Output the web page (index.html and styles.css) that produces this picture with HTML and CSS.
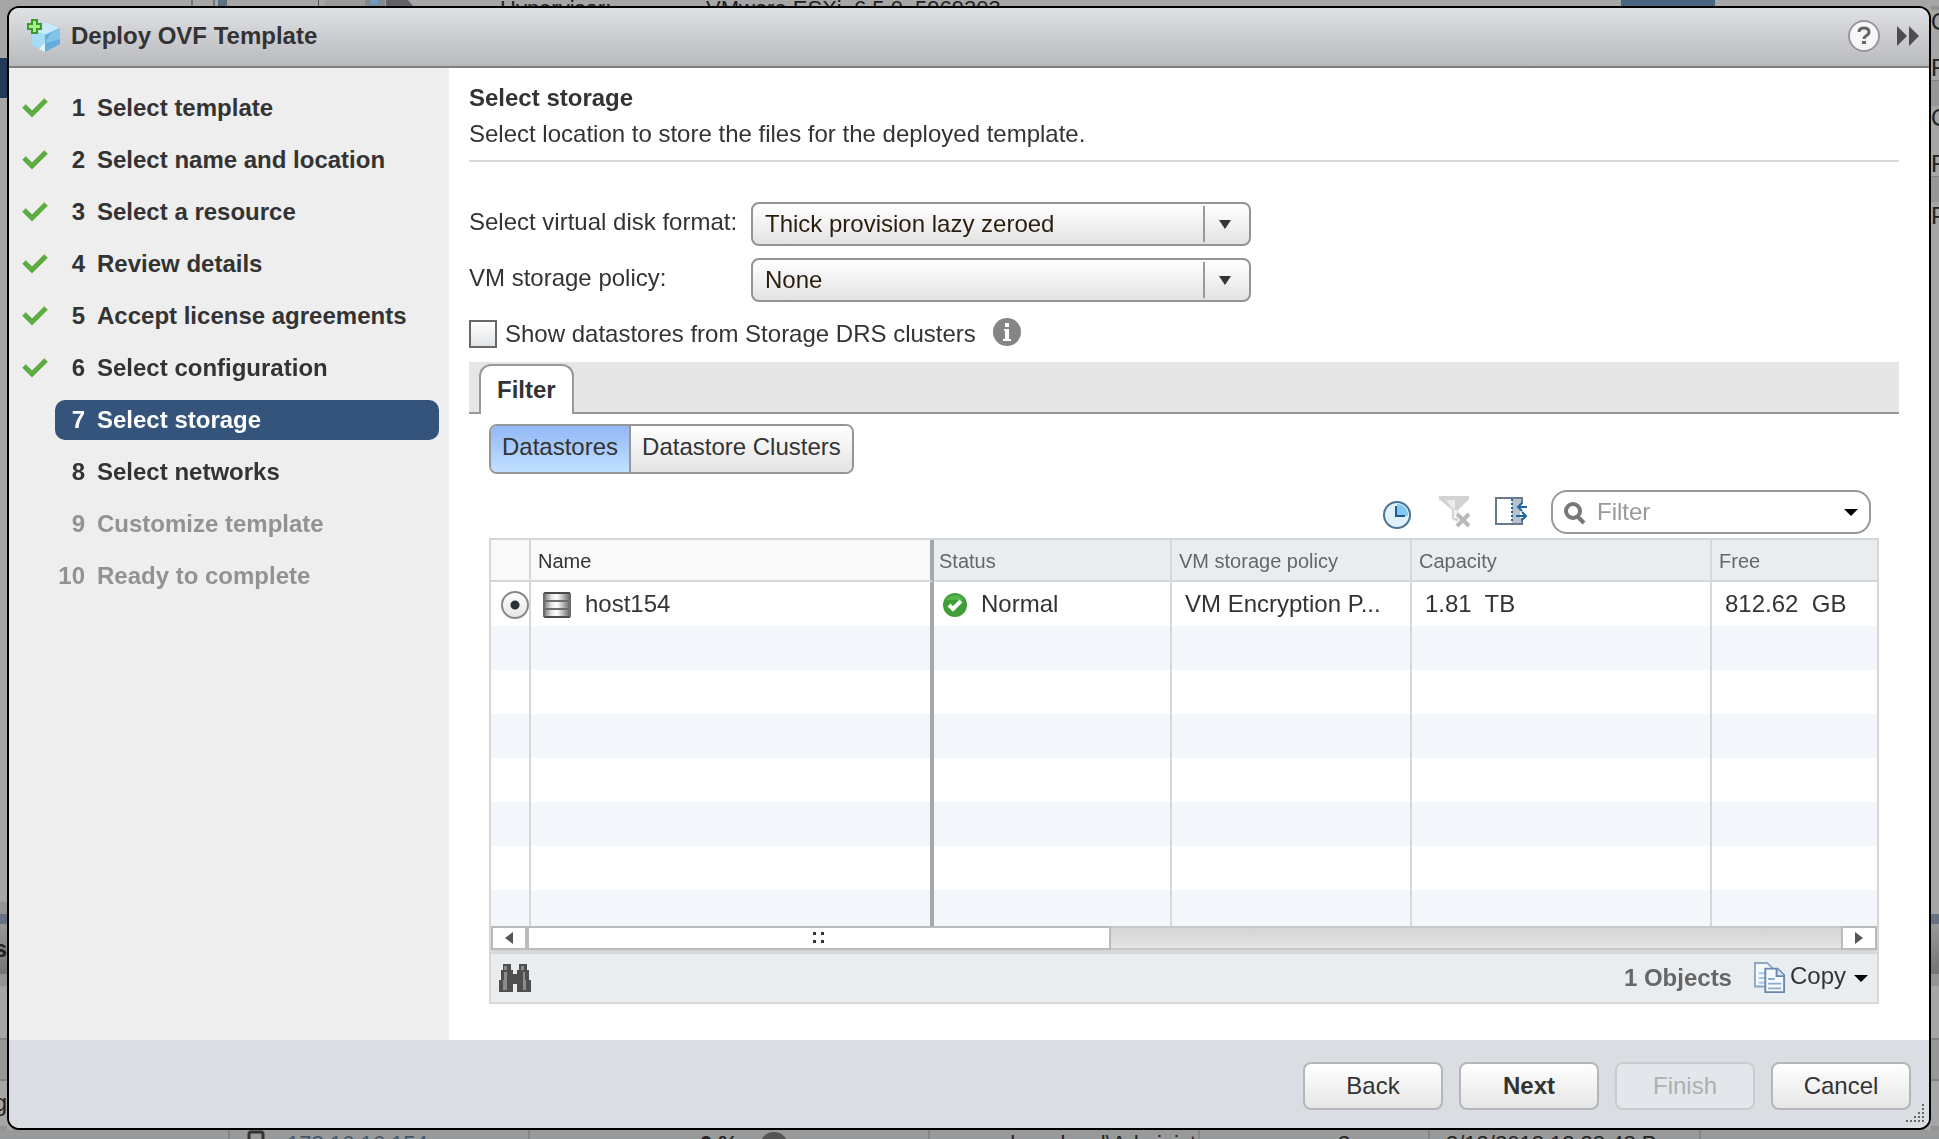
FILE: index.html
```html
<!DOCTYPE html>
<html lang="en">
<head>
<meta charset="utf-8">
<title>Deploy OVF Template</title>
<link rel="stylesheet" href="styles.css">
</head>
<body>
<div class="backdrop" aria-hidden="true">
  <div class="edge-top">
    <svg class="edge-art" viewBox="0 0 430 6" width="430" height="6">
      <path d="M191 0h2v6h-2zM213 0h2v6h-2z" fill="#777"/>
      <path d="M218 0h9v6h-9z" fill="#5d7080"/>
      <path d="M318 0h1v6h-1z" fill="#555"/>
      <path d="M325 0h42v6h-42z" fill="#9a9a9a"/>
      <path d="M365 0h20v6h-20z" fill="#7f8a95"/>
      <path d="M371 0h6v4h-6z" fill="#6a9fcf"/>
      <path d="M386 0h22l5 6h-27z" fill="#626266"/>
    </svg>
    <span class="edge-label">Hypervisor:</span>
    <span class="edge-value">VMware ESXi, 6.5.0, 5969303</span>
    <span class="edge-link"></span>
  </div>
  <div class="edge-left">
    <div class="fill h52"></div>
    <div class="navy"></div>
    <div class="fill grow"></div>
    <div class="band"></div>
    <div class="blue"></div>
    <div class="bar"><b>s</b></div>
    <div class="band"></div>
    <div class="fill h52"></div>
    <div class="shade"></div>
    <div class="fill h45"><span>g</span></div>
    <div class="band thin"></div>
  </div>
  <div class="edge-right">
    <div class="band thin"></div>
    <div class="pair"><span>O</span><span>F</span></div>
    <div class="shade short"></div>
    <div class="pair"><span>O</span><span>F</span></div>
    <div class="shade short"></div>
    <div class="fill grow"><span>P</span></div>
    <div class="blue"></div>
    <div class="bar"></div>
    <div class="band"></div>
    <div class="fill h52"></div>
    <div class="shade"></div>
    <div class="fill h45"></div>
    <div class="band thin"></div>
  </div>
  <div class="edge-bottom">
    <span class="cell c1"></span>
    <span class="cell c2"><svg width="18" height="9" viewBox="0 0 18 9"><path d="M2 9V4q0-2 2-2h10q2 0 2 2v5" fill="none" stroke="#333" stroke-width="3"/></svg><i>172.16.16.154</i></span>
    <span class="cell c3"><b>0 %</b><svg width="32" height="9" viewBox="0 0 32 9"><circle cx="16" cy="16" r="14" fill="#555"/></svg></span>
    <span class="cell c4">vsphere.local\Administrator</span>
    <span class="cell c5">3 ms</span>
    <span class="cell c6">3/13/2018 12:28:48 P</span>
  </div>
</div>

<main class="dialog" role="dialog" aria-labelledby="dialog-title">
  <header class="titlebar">
    <svg class="ovf-icon" width="34" height="34" viewBox="0 0 34 34">
      <path d="M4 10L19 3l14 6v16l-15 8L5 26z" fill="#72bce8"/>
      <path d="M4 10L19 3l14 6-15 7z" fill="#c8e9f8"/>
      <path d="M4 10l14 6v17L5 26z" fill="#a6dcf5"/>
      <path d="M18 16l15-7v16l-15 8z" fill="#65aedb"/>
      <path d="M18 24l6-10 9-5v11z" fill="#83c5ea"/>
      <path d="M18 33V24l-6 6z" fill="#e2f5fd"/>
      <path d="M5 1h5v4h4v5h-4v4H5v-4H1V5h4z" fill="#a6ee85" stroke="#3c9a2b" stroke-width="2"/>
    </svg>
    <h1 id="dialog-title">Deploy OVF Template</h1>
    <button class="icon-button" aria-label="Help">
      <svg width="34" height="34" viewBox="0 0 34 34">
        <circle cx="17" cy="17" r="15" fill="#f7f7f7" stroke="#98989a" stroke-width="2"/>
        <path d="M12 13q0-4 5-4t5 4q0 2-3 4-2 1-2 3" fill="none" stroke="#666" stroke-width="3"/>
        <path d="M15 22h4v3h-4z" fill="#666"/>
      </svg>
    </button>
    <button class="icon-button" aria-label="Collapse">
      <svg width="22" height="22" viewBox="0 0 22 22"><path d="M0 1l10 10L0 21zM12 1l10 10-10 10z" fill="#4d4d4f"/></svg>
    </button>
  </header>

  <div class="body">
    <nav class="steps" aria-label="Wizard steps">
      <ol>
        <li><svg class="check" viewBox="0 0 26 20"><path d="M2 8l8 8L24 2" /></svg><a href="#1"><span class="num">1</span>Select template</a></li>
        <li><svg class="check" viewBox="0 0 26 20"><path d="M2 8l8 8L24 2" /></svg><a href="#2"><span class="num">2</span>Select name and location</a></li>
        <li><svg class="check" viewBox="0 0 26 20"><path d="M2 8l8 8L24 2" /></svg><a href="#3"><span class="num">3</span>Select a resource</a></li>
        <li><svg class="check" viewBox="0 0 26 20"><path d="M2 8l8 8L24 2" /></svg><a href="#4"><span class="num">4</span>Review details</a></li>
        <li><svg class="check" viewBox="0 0 26 20"><path d="M2 8l8 8L24 2" /></svg><a href="#5"><span class="num">5</span>Accept license agreements</a></li>
        <li><svg class="check" viewBox="0 0 26 20"><path d="M2 8l8 8L24 2" /></svg><a href="#6"><span class="num">6</span>Select configuration</a></li>
        <li><span class="check"></span><a href="#7" class="current" aria-current="step"><span class="num">7</span>Select storage</a></li>
        <li><span class="check"></span><a href="#8"><span class="num">8</span>Select networks</a></li>
        <li><span class="check"></span><a class="disabled" href="#9"><span class="num">9</span>Customize template</a></li>
        <li><span class="check"></span><a class="disabled" href="#10"><span class="num">10</span>Ready to complete</a></li>
      </ol>
    </nav>

    <section class="content">
      <div class="intro">
        <h2>Select storage</h2>
        <p>Select location to store the files for the deployed template.</p>
      </div>

      <div class="form">
        <label for="disk-format">Select virtual disk format:</label>
        <div class="combo">
          <select id="disk-format"><option>Thick provision lazy zeroed</option></select>
          <svg class="combo-arrow" width="12" height="10" viewBox="0 0 12 10"><path d="M0 1h12L6 10z" fill="#333"/></svg>
        </div>
        <label for="policy">VM storage policy:</label>
        <div class="combo">
          <select id="policy"><option>None</option></select>
          <svg class="combo-arrow" width="12" height="10" viewBox="0 0 12 10"><path d="M0 1h12L6 10z" fill="#333"/></svg>
        </div>
      </div>
      <div class="drs">
        <input type="checkbox" id="drs"><label for="drs">Show datastores from Storage DRS clusters</label>
        <svg class="info" width="30" height="30" viewBox="0 0 30 30"><circle cx="15" cy="15" r="14" fill="#858585"/><path d="M13 6h4v4h-4zM12 12h5v10h2v2h-8v-2h2v-8h-1z" fill="#fff"/></svg>
      </div>

      <div class="tabs" role="tablist"><button class="tab" role="tab" aria-selected="true">Filter</button></div>

      <div class="panel">
        <div class="toggle">
          <button class="on">Datastores</button><button>Datastore Clusters</button>
        </div>

        <div class="toolbar">
          <button class="icon-button tool-clock" aria-label="Recent">
            <svg width="28" height="28" viewBox="0 0 28 28"><circle cx="14" cy="14" r="13" fill="#dff2fb" stroke="#4a7396" stroke-width="2"/><path d="M14 3a11 11 0 0 1 11 11v1H14z" fill="#83c9f2"/><path d="M13 5v10h9" fill="none" stroke="#22588c" stroke-width="2"/></svg>
          </button>
          <button class="icon-button" aria-label="Clear filter" disabled>
            <svg width="32" height="32" viewBox="0 0 32 32"><path d="M0 0h30v3L19 14v12l-6-3v-9L0 3z" fill="#d2d2d2"/><path d="M7 4h9v9h-2z" fill="#ececec"/><path d="M15 14h3v8h-3z" fill="#f5f5f5"/><path d="M18 18l12 12M30 18L18 30" stroke="#fff" stroke-width="6"/><path d="M18 18l12 12M30 18L18 30" stroke="#bababa" stroke-width="4"/></svg>
          </button>
          <button class="icon-button" aria-label="Columns">
            <svg width="32" height="30" viewBox="0 0 32 30"><path d="M1 1h26v26H1z" fill="#fff" stroke="#68798a" stroke-width="2"/><path d="M17 2h9v24h-9z" fill="#b9c2ca"/><path d="M25 7h7v14h-7z" fill="#fff"/><path d="M17 7h8v14h-8z" fill="#b9c2ca"/><path d="M17 2v24" stroke="#1d64a8" stroke-width="2" stroke-dasharray="2 2"/><path d="M32 10h-9M27 6l-4 4 4 4M21 19h9M27 15l4 4-4 4" fill="none" stroke="#1d64a8" stroke-width="2"/></svg>
          </button>
          <div class="search">
            <svg width="24" height="26" viewBox="0 0 24 26"><circle cx="10" cy="12" r="7" fill="none" stroke="#777" stroke-width="4"/><path d="M14 17l7 7" stroke="#777" stroke-width="4"/></svg>
            <input type="text" placeholder="Filter" aria-label="Filter">
            <svg width="16" height="8" viewBox="0 0 16 8"><path d="M1 1h14L8 8z" fill="#000"/></svg>
          </div>
        </div>

        <div class="grid">
          <div class="rows">
            <table>
              <colgroup><col class="w-sel"><col><col class="w-status"><col class="w-policy"><col class="w-cap"><col class="w-free"></colgroup>
              <thead>
                <tr><th class="locked"></th><th class="locked split">Name</th><th class="first">Status</th><th>VM storage policy</th><th>Capacity</th><th>Free</th></tr>
              </thead>
              <tbody>
                <tr>
                  <td class="pick"><input type="radio" name="datastore" aria-label="host154" checked></td>
                  <td class="split"><span class="with-icon name"><svg width="28" height="26" viewBox="0 0 28 26"><defs><linearGradient id="disk"><stop offset="0" stop-color="#777"/><stop offset=".3" stop-color="#e8e8e8"/><stop offset=".5" stop-color="#fff"/><stop offset="1" stop-color="#666"/></linearGradient></defs><rect x="1" y="1" width="26" height="24" rx="1" fill="url(#disk)"/><path d="M1 1h26M1 25h26" stroke="#4c4c4c" stroke-width="2"/><path d="M1 1v24M27 1v24M1 9h26M1 17h26" stroke="#6c6c6c" stroke-width="2"/></svg>host154</span></td>
                  <td><span class="with-icon"><svg width="24" height="24" viewBox="0 0 24 24"><circle cx="12" cy="12" r="12" fill="#3f9f37"/><path d="M3 7a11 11 0 0 1 18 0z" fill="#58b34c"/><path d="M6 12l4 4 8-8" fill="none" stroke="#fff" stroke-width="4"/></svg>Normal</span></td>
                  <td>VM Encryption P...</td>
                  <td>1.81&nbsp; TB</td>
                  <td>812.62&nbsp; GB</td>
                </tr>
                <tr><td></td><td class="split"></td><td></td><td></td><td></td><td></td></tr>
                <tr><td></td><td class="split"></td><td></td><td></td><td></td><td></td></tr>
                <tr><td></td><td class="split"></td><td></td><td></td><td></td><td></td></tr>
                <tr><td></td><td class="split"></td><td></td><td></td><td></td><td></td></tr>
                <tr><td></td><td class="split"></td><td></td><td></td><td></td><td></td></tr>
                <tr><td></td><td class="split"></td><td></td><td></td><td></td><td></td></tr>
                <tr><td></td><td class="split"></td><td></td><td></td><td></td><td></td></tr>
              </tbody>
            </table>
          </div>
          <div class="scrollbar">
            <button aria-label="Scroll left"><svg width="8" height="12" viewBox="0 0 8 12"><path d="M8 0v12L0 6z" fill="#555"/></svg></button>
            <div class="track"><div class="thumb"><svg width="12" height="12" viewBox="0 0 12 12"><path d="M0 0h3v3H0zM8 0h3v3H8zM0 8h3v3H0zM8 8h3v3H8z" fill="#333"/></svg></div></div>
            <button aria-label="Scroll right"><svg width="8" height="12" viewBox="0 0 8 12"><path d="M0 0v12l8-6z" fill="#555"/></svg></button>
          </div>
          <div class="status">
            <button class="icon-button" aria-label="Find">
              <svg width="32" height="28" viewBox="0 0 32 28"><path d="M4 0h8v6h2v4h4V6h2V0h8v6h2v10h2v12H18v-8h-4v8H0V16h2V6h2z" fill="#4f4f4f"/><path d="M5 2h3v4H5zM22 2h3v4h-3zM5 8h3v18H4V16h1zM24 8h2v8h1v10h-3z" fill="#8c8c8c"/></svg>
            </button>
            <strong>1 Objects</strong>
            <button class="copy">
              <svg width="32" height="34" viewBox="0 0 34 34"><path d="M1 1h13l6 6v19H1z" fill="#f4f9fe" stroke="#8fa6c4" stroke-width="2"/><path d="M5 12h8M5 17h8M5 22h8" stroke="#a9c4e4" stroke-width="2"/><path d="M12 7h13l7 7v18H12z" fill="#f4f9fe" stroke="#6b87ae" stroke-width="2"/><path d="M24 7v8h8" fill="#dbe8f6" stroke="#6b87ae" stroke-width="2"/><path d="M15 18h7M15 23h14M15 28h14" stroke="#8aa9d0" stroke-width="2"/></svg>
              <span>Copy</span>
              <svg width="16" height="8" viewBox="0 0 16 8"><path d="M1 1h14L8 8z" fill="#000"/></svg>
            </button>
          </div>
        </div>
      </div>
    </section>
  </div>

  <footer class="actions">
    <button>Back</button>
    <button class="primary">Next</button>
    <button disabled>Finish</button>
    <button>Cancel</button>
    <svg class="grip" width="20" height="20" viewBox="0 0 20 20"><path d="M17 1h2M17 5h2M13 9h6M9 13h10M1 17h18" stroke="#666" stroke-width="2" stroke-dasharray="2 2"/></svg>
  </footer>
</main>
</body>
</html>
```
FILE: styles.css
```css
* { box-sizing: border-box; }

body {
  margin: 0;
  height: 100vh;
  overflow: hidden;
  background: #a6a6a7;
  color: #333;
  font: 24px/28px "Liberation Sans", Arial, sans-serif;
}

button, input, select { font: inherit; color: inherit; }
button { padding: 0; border: 0; background: none; }
svg { display: block; flex: none; }
h1, h2, p, ol { margin: 0; padding: 0; }
h1, h2 { font-size: 24px; }
a { color: inherit; text-decoration: none; }

/* Dimmed application behind the dialog */
.backdrop {
  height: 100%;
  display: grid;
  grid-template: 6px 1fr 9px / 7px 1fr 8px;
  color: #222;
}
.edge-top {
  grid-column: 1 / 4;
  display: flex;
  height: 6px;
  overflow: hidden;
  font-size: 22px;
  line-height: 18px;
  white-space: nowrap;
}
.edge-art { margin-right: 70px; }
.edge-label { width: 206px; }
.edge-value { width: 915px; }
.edge-link { width: 94px; background: #4a6580; }
.edge-left, .edge-right { display: flex; flex-direction: column; overflow: hidden; min-height: 0; }
.edge-left { direction: rtl; grid-row: 2; }
.edge-right { grid-column: 3; grid-row: 2; }
.fill { background: #a6a6a7; flex: none; overflow: hidden; }
.h52 { height: 52px; }
.h45 { height: 45px; line-height: 44px; }
.navy { height: 40px; background: #203a5c; flex: none; }
.grow { flex: 1 1 0; }
.band { height: 12px; background: #949495; flex: none; }
.band.thin { height: 4px; }
.blue { height: 10px; background: #667184; flex: none; }
.bar { height: 50px; line-height: 50px; background: linear-gradient(#989899, #747475); flex: none; }
.shade { height: 43px; background: #979798; border: solid #828283; border-width: 2px 0; flex: none; }
.shade.short { height: 26px; border-width: 1px 0 0; }
.pair { display: flex; flex-direction: column; height: 70px; justify-content: space-between; line-height: 24px; flex: none; background: #a6a6a7; overflow: hidden; }
.edge-bottom {
  grid-column: 1 / 4;
  display: flex;
  height: 9px;
  overflow: hidden;
  background: #97999b;
  font-size: 22px;
  line-height: 28px;
  white-space: nowrap;
}
.cell { display: flex; border-right: 2px solid #858687; flex: none; overflow: hidden; }
.cell i { font-style: normal; color: #43576b; margin-left: 22px; }
.c1 { width: 230px; }
.c2 { width: 300px; padding-left: 17px; }
.c3 { width: 400px; padding-left: 170px; gap: 20px; }
.c4 { width: 270px; padding-left: 46px; }
.c5 { width: 230px; padding-left: 138px; }
.c6 { width: 271px; padding-left: 16px; }

/* Dialog frame */
.dialog {
  position: fixed;
  inset: 6px 8px 9px 7px;
  display: flex;
  flex-direction: column;
  border: 2px solid #000;
  border-radius: 12px;
  overflow: hidden;
  background: #fff;
}
.titlebar {
  display: flex;
  align-items: center;
  height: 60px;
  padding: 0 10px 2px 18px;
  border-bottom: 2px solid #7e7e80;
  background: linear-gradient(#e0e1e4, #b8b9bc);
}
.titlebar h1 { flex: 1; margin-left: 10px; }
.titlebar .icon-button + .icon-button { margin-left: 16px; }

.body { flex: 1; display: flex; min-height: 0; }

/* Wizard steps */
.steps { width: 440px; flex: none; padding: 20px 10px 0 13px; background: #eee; }
.steps ol { display: grid; gap: 12px; list-style: none; }
.steps li { display: flex; align-items: center; gap: 7px; }
.check { width: 26px; height: 20px; flex: none; fill: none; stroke: #5cac40; stroke-width: 5; }
.steps a {
  flex: 1;
  display: flex;
  height: 40px;
  line-height: 40px;
  border-radius: 10px;
  font-weight: bold;
}
.num { width: 30px; margin-right: 12px; display: flex; justify-content: flex-end; }
.steps .current { background: #34547c; color: #fff; }
.steps .disabled { color: #929292; }

/* Content */
.content { flex: 1; min-width: 0; display: flex; flex-direction: column; padding: 12px 30px 36px 20px; }
.intro { border-bottom: 2px solid #d8d8d8; padding: 4px 0 12px; display: grid; gap: 8px; margin-bottom: 40px; }
.form { display: grid; grid-template-columns: 282px 500px; gap: 12px 0; align-items: center; }
.form label { padding-bottom: 4px; }
.combo { position: relative; }
.combo select {
  appearance: none;
  display: block;
  width: 100%;
  height: 44px;
  padding: 0 60px 0 12px;
  border: 2px solid #949494;
  border-radius: 8px;
  background: linear-gradient(#999, #999) right 44px center / 2px 36px no-repeat, linear-gradient(#fff, #e3e3e3);
  color: #2b1d0e;
}
.combo-arrow { position: absolute; right: 20px; top: 17px; pointer-events: none; }
.drs { display: flex; align-items: center; margin: 16px 0 12px; height: 32px; }
.drs input {
  appearance: none;
  width: 28px;
  height: 28px;
  margin: 0 8px 0 0;
  border: 2px solid #666a6d;
  background: linear-gradient(#fff, #e2e4e6);
}
.info { margin: 0 0 4px 16px; }

.tabs { flex: none; height: 52px; padding: 2px 0 0 10px; background: #e6e6e6; border-bottom: 2px solid #999; }
.tab {
  display: block;
  height: 50px;
  padding: 0 16px;
  border: 2px solid #999;
  border-bottom: 0;
  border-radius: 12px 12px 0 0;
  background: #fff;
  font-weight: bold;
}
.panel { flex: 1; min-height: 0; display: flex; flex-direction: column; padding: 10px 20px 0; }
.toggle {
  align-self: flex-start;
  display: flex;
  height: 50px;
  border: 2px solid #949698;
  border-radius: 8px;
  overflow: hidden;
}
.toggle button { padding: 0 11px 4px; background: linear-gradient(#fff, #e3e3e3); }
.toggle .on { background: linear-gradient(#93b8f5, #c0e0ff); border-right: 2px solid #949698; }

.toolbar { display: flex; justify-content: flex-end; align-items: center; gap: 24px; padding: 16px 8px 4px; }
.tool-clock { padding-top: 6px; margin-right: 4px; }
.search {
  display: flex;
  align-items: center;
  width: 320px;
  height: 44px;
  padding: 0 10px;
  border: 2px solid #999;
  border-radius: 16px;
}
.search input { flex: 1; min-width: 0; padding: 0 10px; border: 0; outline: 0; background: none; }
.search input::placeholder { color: #999; opacity: 1; }

/* Datastore list */
.grid { flex: 1; min-height: 0; display: flex; flex-direction: column; border: 2px solid #d6d7d9; }
.rows { flex: 1; min-height: 0; overflow: hidden; }
table { width: 100%; table-layout: fixed; border-collapse: separate; border-spacing: 0; }
.w-sel { width: 40px; }
.w-status { width: 238px; }
.w-policy { width: 240px; }
.w-cap { width: 300px; }
.w-free { width: 165px; }
th {
  height: 42px;
  padding: 2px 7px 0;
  border: solid #d6d7d9;
  border-width: 0 2px 2px 0;
  background: #eaedf0;
  color: #666;
  font-size: 20px;
  font-weight: normal;
  text-align: left;
}
th.first { padding-left: 5px; }
th.locked { background: #f9f9f9; color: #333; }
td { height: 44px; padding: 0 13px; border-right: 2px solid #d6d7d9; white-space: nowrap; }
th.split, td.split { border-right: 4px solid #a4a8ab; }
th:last-child, td:last-child { border-right: 0; }
tbody tr:nth-child(even) { background: #f3f6fb; }
.with-icon { display: flex; align-items: center; gap: 14px; margin-left: -4px; }
.with-icon svg { margin-top: 2px; }
.name { margin-left: -1px; }
td.pick { padding: 2px 0 0 10px; }
.pick input {
  appearance: none;
  display: block;
  width: 28px;
  height: 28px;
  margin: 0;
  border: 2px solid #888;
  border-radius: 50%;
  background: radial-gradient(circle, #27323b 4px, transparent 5px), linear-gradient(#fff, #e6e6e6);
}

.scrollbar { flex: none; display: flex; height: 28px; border-bottom: 4px solid #d8d8d8; }
.scrollbar button { display: grid; place-items: center; width: 36px; border: 2px solid #bbb; background: #fff; }
.track { flex: 1; background: linear-gradient(#d4d4d4, #e4e4e4); border: solid #c8c8c8; border-width: 2px 0; }
.thumb { display: grid; place-items: center; width: 584px; height: 24px; margin-top: -2px; border: 2px solid #bbb; background: #fff; }
.status { flex: none; display: flex; align-items: center; height: 48px; padding: 0 8px; background: #eaedf0; }
.status strong { margin-left: auto; color: #666; }
.copy { display: flex; align-items: center; margin-left: 22px; }
.copy span { margin: 0 7px 4px 4px; }

/* Dialog actions */
.actions {
  position: relative;
  display: flex;
  justify-content: flex-end;
  gap: 16px;
  padding: 22px 18px 18px;
  background: #dadde2;
}
.actions button {
  width: 140px;
  height: 48px;
  border: 2px solid #b4b6b9;
  border-radius: 8px;
  background: linear-gradient(#fff, #e6e6e6);
}
.actions .primary { font-weight: bold; }
.actions button:disabled { background: #e3e6ea; border-color: #c8cbcf; color: #adb0b3; }
.grip { position: absolute; right: 4px; bottom: 4px; }
```
